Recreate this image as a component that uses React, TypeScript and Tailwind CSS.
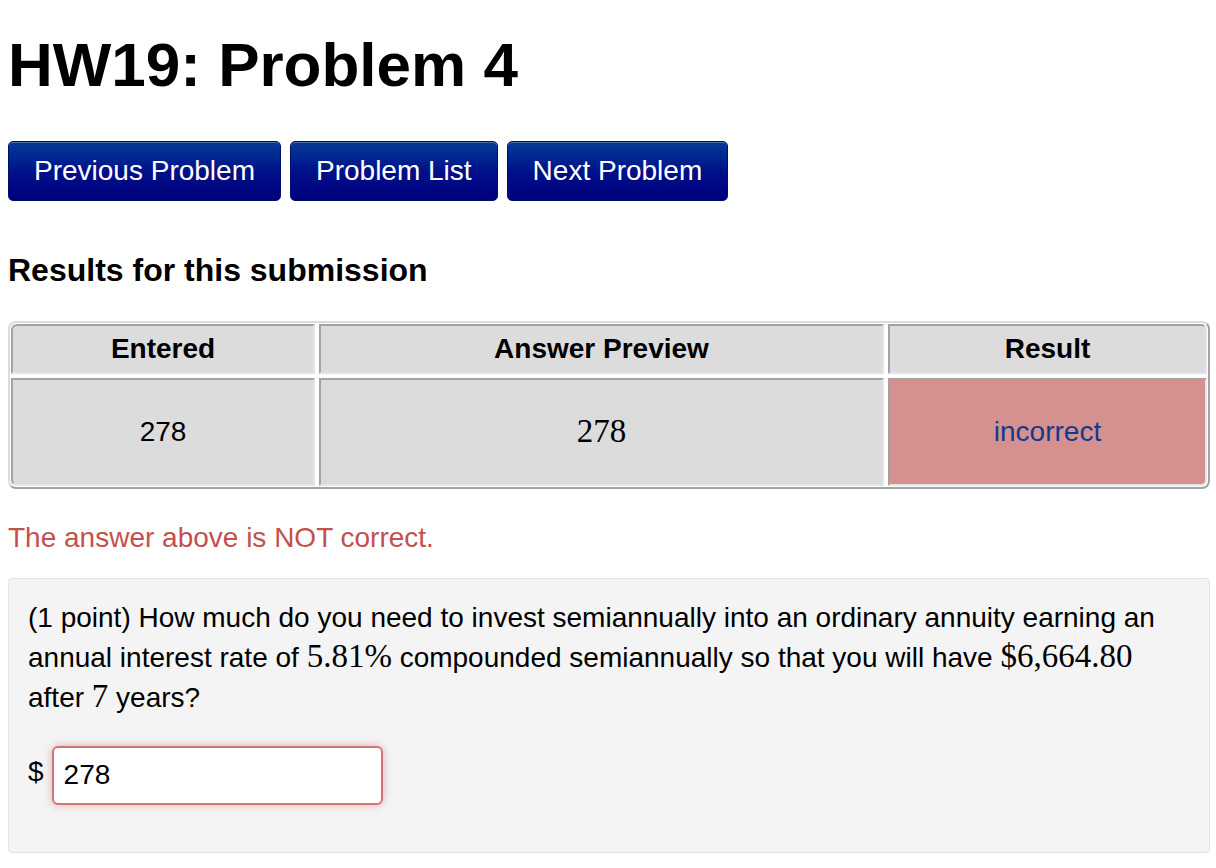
export default function App() {
  const sans = "font-['Liberation_Sans',Arial,Helvetica,sans-serif]";
  const serif = "font-['Liberation_Serif','Times_New_Roman',serif]";

  return (
    <div className={`min-h-screen bg-white px-2 text-black ${sans}`}>
      {/* Title */}
      <h1 className="pt-[28px] text-[62px] font-bold leading-[1.2]">HW19: Problem 4</h1>

      {/* Nav buttons */}
      <div className="mt-[39px] flex gap-[9px]">
        <button className="h-[60px] rounded-[5px] border border-[#00106a] bg-gradient-to-b from-[#0b3897] via-[#00108a] to-[#00007c] px-[25px] text-[28px] text-white shadow-[inset_0_1px_0_rgba(255,255,255,0.25)]">
          Previous Problem
        </button>
        <button className="h-[60px] rounded-[5px] border border-[#00106a] bg-gradient-to-b from-[#0b3897] via-[#00108a] to-[#00007c] px-[25px] text-[28px] text-white shadow-[inset_0_1px_0_rgba(255,255,255,0.25)]">
          Problem List
        </button>
        <button className="h-[60px] rounded-[5px] border border-[#00106a] bg-gradient-to-b from-[#0b3897] via-[#00108a] to-[#00007c] px-[25px] text-[28px] text-white shadow-[inset_0_1px_0_rgba(255,255,255,0.25)]">
          Next Problem
        </button>
      </div>

      {/* Results */}
      <h2 className="mt-[50px] text-[32px] font-bold leading-[1.2]">Results for this submission</h2>

      <div className="mt-[31px] w-[1202px] rounded-[8px] border-2 border-t-[#dcdcdc] border-l-[#dcdcdc] border-b-[#a3a3a3] border-r-[#a3a3a3] p-px">
        <div className="grid grid-cols-[304px_565px_1fr] grid-rows-[50px_108px] gap-[4px]">
          <div className="flex items-center justify-center rounded-tl-[6px] border-2 border-t-[#a3a3a3] border-l-[#a3a3a3] border-b-[#e4e4e4] border-r-[#e4e4e4] bg-[#dcdcdc] text-[28px] font-bold">
            Entered
          </div>
          <div className="flex items-center justify-center border-2 border-t-[#a3a3a3] border-l-[#a3a3a3] border-b-[#e4e4e4] border-r-[#e4e4e4] bg-[#dcdcdc] text-[28px] font-bold">
            Answer Preview
          </div>
          <div className="flex items-center justify-center rounded-tr-[6px] border-2 border-t-[#a3a3a3] border-l-[#a3a3a3] border-b-[#e4e4e4] border-r-[#e4e4e4] bg-[#dcdcdc] text-[28px] font-bold">
            Result
          </div>
          <div className="flex items-center justify-center rounded-bl-[6px] border-2 border-t-[#a3a3a3] border-l-[#a3a3a3] border-b-[#e4e4e4] border-r-[#e4e4e4] bg-[#dcdcdc] text-[28px]">
            278
          </div>
          <div className={`flex items-center justify-center border-2 border-t-[#a3a3a3] border-l-[#a3a3a3] border-b-[#e4e4e4] border-r-[#e4e4e4] bg-[#dcdcdc] text-[33px] ${serif}`}>
            278
          </div>
          <div className="flex items-center justify-center rounded-br-[6px] border-2 border-t-[#a3a3a3] border-l-[#a3a3a3] border-b-[#e4e4e4] border-r-[#e4e4e4] bg-[#d59190] text-[28px] text-[#13398d]">
            incorrect
          </div>
        </div>
      </div>

      <p className="mt-[29px] text-[28px] leading-[40px] text-[#c4504d]">The answer above is NOT correct.</p>

      {/* Problem */}
      <div className="mt-[20px] w-[1202px] rounded-[4px] border border-[#e2e2e2] bg-[#f4f4f4] px-[19px] pt-[19px] pb-[47px] text-[28px] leading-[40px]">
        <p>
          (1 point) How much do you need to invest semiannually into an ordinary annuity earning an annual interest
          rate of <span className={`text-[33px] leading-none ${serif}`}>5.81%</span> compounded semiannually so that you
          will have <span className={`text-[33px] leading-none ${serif}`}>$6,664.80</span>
          <br />
          after <span className={`text-[33px] leading-none ${serif}`}>7</span> years?
        </p>
        <div className="mt-[28px] flex items-start gap-[8px]">
          <span className="pt-[6px]">$</span>
          <input
            readOnly
            value="278"
            className="h-[59px] w-[331px] rounded-[6px] border-2 border-[#cf7676] bg-white px-[10px] text-[28px] text-black shadow-[0_0_8px_rgba(200,90,90,0.45)] outline-none"
          />
        </div>
      </div>
    </div>
  );
}
